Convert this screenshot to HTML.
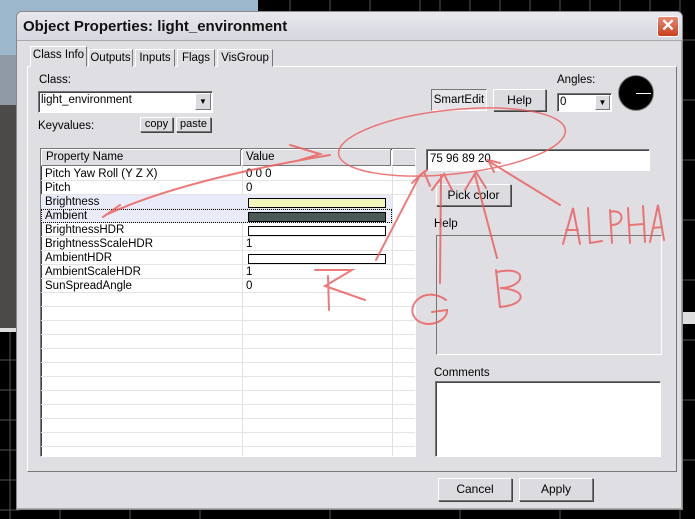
<!DOCTYPE html>
<html><head><meta charset="utf-8"><style>
*{margin:0;padding:0;box-sizing:border-box}
body{width:695px;height:519px;overflow:hidden;position:relative;background:#000;font-family:"Liberation Sans",sans-serif;font-size:11px;color:#000}
.a{position:absolute}
.btn{position:absolute;background:#dcdce0;border:1px solid;border-color:#fff #777 #777 #fff;box-shadow:1px 1px 0 #444;text-align:center;font-size:12px}
.sunk{position:absolute;border:1px solid;border-color:#777 #fff #fff #777;box-shadow:inset 1px 1px 0 #444}
.row{position:absolute;left:0;width:374px;height:14px;border-bottom:1px solid #e4e4e4}
.row span{position:absolute;top:0;font-size:11.5px;line-height:14px}
.bar{position:absolute;left:207px;top:3px;width:138px;height:10px;border:1px solid #000}
.tab{position:absolute;top:49px;height:18px;border:1px solid;border-color:#fff #777 #dfdfe3 #fff;font-size:11.5px;line-height:16px;text-align:center;background:#dfdfe3}
</style></head><body>
<div class="a" style="left:0;top:0;width:20px;height:55px;background:#9cb6cc"></div>
<div class="a" style="left:0;top:55px;width:20px;height:50px;background:#8f9aa4"></div>
<div class="a" style="left:0;top:105px;width:20px;height:225px;background:#4c4a48"></div>
<div class="a" style="left:0;top:328px;width:20px;height:4px;background:#ddd"></div>
<svg class="a" style="left:0;top:0" width="695" height="519">
<g stroke="#555" stroke-width="1">
<line x1="0" y1="360" x2="20" y2="360"/><line x1="0" y1="390" x2="20" y2="390"/><line x1="0" y1="420" x2="20" y2="420"/><line x1="0" y1="450" x2="20" y2="450"/><line x1="0" y1="480" x2="20" y2="480"/><line x1="0" y1="510" x2="20" y2="510"/>
<line x1="10" y1="332" x2="10" y2="519"/>
<line x1="290" y1="0" x2="290" y2="12"/><line x1="330" y1="0" x2="330" y2="12"/><line x1="370" y1="0" x2="370" y2="12"/><line x1="420" y1="0" x2="420" y2="12"/><line x1="440" y1="0" x2="440" y2="12"/><line x1="470" y1="0" x2="470" y2="12"/><line x1="500" y1="0" x2="500" y2="12"/><line x1="530" y1="0" x2="530" y2="12"/><line x1="560" y1="0" x2="560" y2="12"/><line x1="590" y1="0" x2="590" y2="12"/><line x1="620" y1="0" x2="620" y2="12"/><line x1="650" y1="0" x2="650" y2="12"/><line x1="680" y1="0" x2="680" y2="519"/>
<line x1="683" y1="40" x2="695" y2="40"/><line x1="683" y1="100" x2="695" y2="100"/><line x1="683" y1="160" x2="695" y2="160"/><line x1="683" y1="220" x2="695" y2="220"/><line x1="683" y1="280" x2="695" y2="280"/><line x1="683" y1="340" x2="695" y2="340"/><line x1="683" y1="400" x2="695" y2="400"/><line x1="683" y1="460" x2="695" y2="460"/>
<line x1="60" y1="510" x2="60" y2="519"/><line x1="130" y1="510" x2="130" y2="519"/><line x1="200" y1="510" x2="200" y2="519"/><line x1="330" y1="510" x2="330" y2="519"/><line x1="460" y1="510" x2="460" y2="519"/><line x1="560" y1="510" x2="560" y2="519"/>
</g>
<rect x="683" y="312" width="12" height="12" fill="#ddd"/>
<rect x="20" y="0" width="238" height="12" fill="#9cb6cc"/>
</svg>
<div class="a" style="left:16px;top:11px;width:667px;height:499px;background:#dfdfe3;border:1px solid #888;border-radius:6px 6px 0 0;box-shadow:inset -1px -1px 0 #aaa"></div>
<div class="a" style="left:17px;top:12px;width:665px;height:29px;background:linear-gradient(#e8e8ee,#d6d6de);border-radius:5px 5px 0 0;border-bottom:1px solid #aaa"></div>
<div class="a" style="left:23px;top:18px;font-size:15px;font-weight:bold;color:#111">Object Properties: light_environment</div>
<div class="a" style="left:657px;top:16px;width:22px;height:21px;background:linear-gradient(#e88a70,#c8401e);border:1px solid #fff;border-radius:3px;color:#fff;font-size:17px;line-height:18px;text-align:center;font-weight:bold">✕</div>
<div class="a" style="left:27px;top:66px;width:650px;height:406px;border:1px solid;border-color:#fff #777 #777 #fff"></div>
<div class="tab" style="left:30px;top:46px;width:57px;height:21px;border-color:#fff #777 #dfdfe3 #fff">Class Info</div>
<div class="tab" style="left:88px;width:45px">Outputs</div>
<div class="tab" style="left:135px;width:40px">Inputs</div>
<div class="tab" style="left:177px;width:38px">Flags</div>
<div class="tab" style="left:217px;width:56px">VisGroup</div>
<div class="a" style="left:39px;top:74px;font-size:11.5px">Class:</div>
<div class="sunk" style="left:38px;top:91px;width:175px;height:22px;background:#fff"><span class="a" style="left:2px;top:2px;font-size:11.5px">light_environment</span>
<div class="btn" style="left:156px;top:1px;width:16px;height:17px;font-size:8px;line-height:16px;box-shadow:none">▼</div></div>
<div class="a" style="left:38px;top:120px;font-size:11.5px">Keyvalues:</div>
<div class="btn" style="left:140px;top:117px;width:33px;height:15px;font-size:11px;line-height:13px">copy</div>
<div class="btn" style="left:176px;top:117px;width:35px;height:15px;font-size:11px;line-height:13px">paste</div>
<div class="sunk" style="left:40px;top:148px;width:376px;height:309px;background:#fff;overflow:hidden">
<div class="a" style="left:0;top:0;width:200px;height:17px;background:#dfdfe3;border:1px solid;border-color:#fff #777 #777 #fff;font-size:11.5px;line-height:15px;padding-left:4px">Property Name</div>
<div class="a" style="left:201px;top:0;width:149px;height:17px;background:#dfdfe3;border:1px solid;border-color:#fff #777 #777 #fff;font-size:11.5px;line-height:15px;padding-left:3px">Value</div>
<div class="a" style="left:351px;top:0;width:30px;height:17px;background:#dfdfe3;border:1px solid;border-color:#fff #777 #777 #fff"></div>
<div class="a" style="left:201px;top:17px;width:1px;height:300px;background:#e0e0e0"></div>
<div class="a" style="left:351px;top:17px;width:1px;height:300px;background:#e0e0e0"></div>
<div style="position:absolute;left:0;top:18px">
<div class="row" style="top:0"><span style="left:4px">Pitch Yaw Roll (Y Z X)</span><span style="left:205px">0 0 0</span></div>
<div class="row" style="top:14px"><span style="left:4px">Pitch</span><span style="left:205px">0</span></div>
<div class="row" style="top:28px;background:#e9ecf8;width:351px"><span style="left:4px">Brightness</span><div class="bar" style="background:#f4f7bc"></div></div>
<div class="row" style="top:42px;background:#e9ecf8;width:351px;outline:1px dotted #000;outline-offset:-1px"><span style="left:4px">Ambient</span><div class="bar" style="background:#4b5a57"></div></div>
<div class="row" style="top:56px"><span style="left:4px">BrightnessHDR</span><div class="bar" style="background:#fff"></div></div>
<div class="row" style="top:70px"><span style="left:4px">BrightnessScaleHDR</span><span style="left:205px">1</span></div>
<div class="row" style="top:84px"><span style="left:4px">AmbientHDR</span><div class="bar" style="background:#fff"></div></div>
<div class="row" style="top:98px"><span style="left:4px">AmbientScaleHDR</span><span style="left:205px">1</span></div>
<div class="row" style="top:112px"><span style="left:4px">SunSpreadAngle</span><span style="left:205px">0</span></div>
<div class="row" style="top:126px"></div><div class="row" style="top:140px"></div><div class="row" style="top:154px"></div><div class="row" style="top:168px"></div><div class="row" style="top:182px"></div><div class="row" style="top:196px"></div><div class="row" style="top:210px"></div><div class="row" style="top:224px"></div><div class="row" style="top:238px"></div><div class="row" style="top:252px"></div><div class="row" style="top:266px"></div><div class="row" style="top:280px"></div>
</div></div>
<div class="a" style="left:431px;top:89px;width:56px;height:22px;background:#e6e6ea;border:1px solid;border-color:#777 #fff #fff #777;font-size:11.5px;line-height:20px;text-align:center">SmartEdit</div>
<div class="btn" style="left:493px;top:89px;width:53px;height:22px;line-height:20px">Help</div>
<div class="a" style="left:557px;top:74px;font-size:11.5px">Angles:</div>
<div class="sunk" style="left:557px;top:93px;width:55px;height:19px;background:#fff"><span class="a" style="left:2px;top:2px;font-size:11.5px">0</span>
<div class="btn" style="left:37px;top:1px;width:15px;height:15px;font-size:8px;line-height:14px;box-shadow:none">▼</div></div>
<div class="a" style="left:618px;top:75px;width:36px;height:36px;border-radius:50%;background:#000;border:1px solid #888"></div>
<div class="a" style="left:636px;top:93px;width:15px;height:1px;background:#fff"></div>
<div class="sunk" style="left:426px;top:149px;width:224px;height:22px;background:#fff"><span class="a" style="left:3px;top:3px;font-size:11.5px">75 96 89 20</span></div>
<div class="btn" style="left:436px;top:184px;width:75px;height:22px;line-height:20px">Pick color</div>
<div class="a" style="left:434px;top:218px;font-size:11.5px">Help</div>
<div class="sunk" style="left:436px;top:235px;width:226px;height:120px;background:#dfdfe3;box-shadow:none"></div>
<div class="a" style="left:434px;top:367px;font-size:11.5px">Comments</div>
<div class="sunk" style="left:435px;top:381px;width:226px;height:76px;background:#fff"></div>
<div class="btn" style="left:438px;top:478px;width:74px;height:23px;line-height:21px">Cancel</div>
<div class="btn" style="left:519px;top:478px;width:74px;height:23px;line-height:21px">Apply</div>
<svg class="a" style="left:0;top:0" width="695" height="519" fill="none" stroke="#ec5a5a" stroke-width="2" stroke-linecap="round" opacity="0.8">
<ellipse cx="452" cy="142" rx="114" ry="32" transform="rotate(-6 452 142)" stroke-width="1.5"/>
<path d="M108 214 C160 190 240 170 330 155"/>
<path d="M290 145 L320 154 L300 160"/>
<path d="M103 217 L120 205"/>
<path d="M376 260 L420 175 L427 170"/>
<path d="M412 183 L424 172 L430 186"/>
<path d="M328 276 L329 310 M315 270 L352 270 L325 286 L365 300"/>
<path d="M440 283 L441 175 M432 190 L444 174 L452 190"/>
<path d="M446 300 C425 285 405 305 415 318 C425 330 448 322 447 310 L432 312"/>
<path d="M497 258 L475 175 M465 190 L476 172 L486 188"/>
<path d="M496 270 L500 307 M497 272 C530 265 525 288 500 288 C530 290 525 305 500 307"/>
<path d="M560 205 L490 162 M500 163 L488 160 L494 172"/>
<path d="M563 244 L573 208 L580 244 M566 230 L578 230"/>
<path d="M588 208 L590 243 L602 241"/>
<path d="M610 210 L612 243 M610 212 C625 208 625 225 612 225"/>
<path d="M628 208 L630 243 M643 206 L645 242 M630 225 L644 224"/>
<path d="M650 242 L658 205 L664 240 M653 228 L662 227"/>
</svg>
</body></html>
